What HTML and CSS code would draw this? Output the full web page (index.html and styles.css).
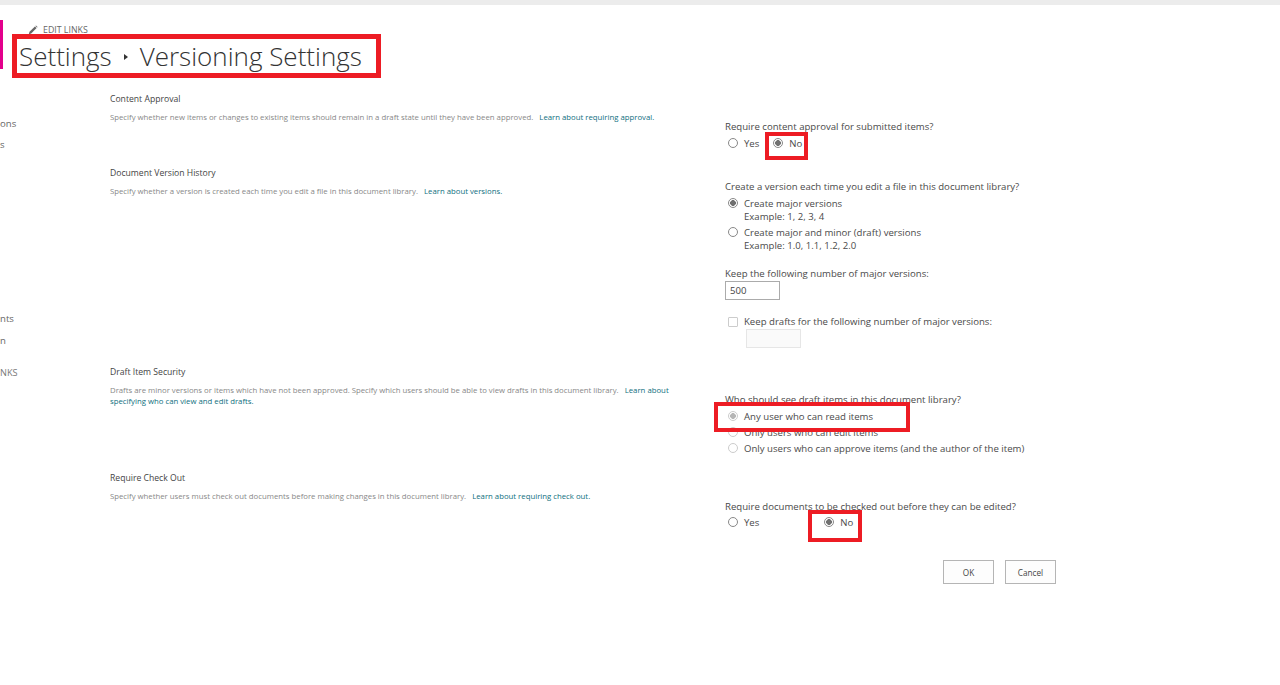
FILE: index.html
```html
<!DOCTYPE html>
<html lang="en">
<head>
<meta charset="utf-8">
<title>Versioning Settings</title>
<link rel="stylesheet" href="styles.css">
</head>
<body>
<div class="topbar"></div>
<div class="brand-stripe"></div>
<header class="header">
  <div class="edit-links">
    <svg class="pencil" viewBox="0 0 10 10" width="10" height="10"><path d="M0.8 9.2 L1.5 6.8 L6.9 1.4 L8.6 3.1 L3.2 8.5 Z" fill="#666"/><path d="M7.4 0.9 L8 0.4 L9.6 2 L9.1 2.6 Z" fill="#666"/></svg>
    <span>EDIT LINKS</span>
  </div>
  <h1 class="title"><span>Settings</span><span class="crumb-arrow"></span><span>Versioning Settings</span></h1>
</header>
<div class="page">
  <nav class="nav">
    <a class="nav-item nav-a">ons</a>
    <a class="nav-item nav-b">s</a>
    <a class="nav-item nav-c">nts</a>
    <a class="nav-item nav-d">n</a>
    <a class="nav-item nav-e">NKS</a>
  </nav>
  <main class="form">
    <section class="row row-approval">
      <div class="info">
        <h2>Content Approval</h2>
        <p>Specify whether new items or changes to existing items should remain in a draft state until they have been approved. &nbsp; <a href="#">Learn about requiring approval.</a></p>
      </div>
      <div class="controls pad-approval">
        <div class="q">Require content approval for submitted items?</div>
        <div class="inline inline-gap">
          <label class="opt gap-yes"><input type="radio" name="a"><span>Yes</span></label>
          <label class="opt"><input type="radio" name="a" checked><span>No</span></label>
        </div>
      </div>
    </section>
    <section class="row row-history">
      <div class="info">
        <h2>Document Version History</h2>
        <p>Specify whether a version is created each time you edit a file in this document library. &nbsp; <a href="#">Learn about versions.</a></p>
      </div>
      <div class="controls pad-history">
        <div class="q">Create a version each time you edit a file in this document library?</div>
        <label class="opt opt-tight opt-first"><input type="radio" name="b" checked><span>Create major versions</span></label>
        <div class="example">Example: 1, 2, 3, 4</div>
        <label class="opt opt-tight"><input type="radio" name="b"><span>Create major and minor (draft) versions</span></label>
        <div class="example">Example: 1.0, 1.1, 1.2, 2.0</div>
        <div class="q q-keep">Keep the following number of major versions:</div>
        <input class="num" type="text" value="500">
        <label class="opt opt-check"><input type="checkbox" disabled><span>Keep drafts for the following number of major versions:</span></label>
        <input class="num num-off" type="text" disabled>
      </div>
    </section>
    <section class="row row-draft">
      <div class="info">
        <h2>Draft Item Security</h2>
        <p>Drafts are minor versions or items which have not been approved. Specify which users should be able to view drafts in this document library. &nbsp; <a href="#">Learn about</a> <a href="#">specifying who can view and edit drafts.</a></p>
      </div>
      <div class="controls pad-draft">
        <div class="q">Who should see draft items in this document library?</div>
        <label class="opt opt-any"><input type="radio" name="c" checked disabled><span>Any user who can read items</span></label>
        <label class="opt"><input type="radio" name="c" disabled><span>Only users who can edit items</span></label>
        <label class="opt"><input type="radio" name="c" disabled><span>Only users who can approve items (and the author of the item)</span></label>
      </div>
    </section>
    <section class="row row-checkout">
      <div class="info">
        <h2>Require Check Out</h2>
        <p>Specify whether users must check out documents before making changes in this document library. &nbsp; <a href="#">Learn about requiring check out.</a></p>
      </div>
      <div class="controls pad-checkout">
        <div class="q">Require documents to be checked out before they can be edited?</div>
        <div class="inline">
          <label class="opt gap-yes-wide"><input type="radio" name="d"><span>Yes</span></label>
          <label class="opt"><input type="radio" name="d" checked><span>No</span></label>
        </div>
        <div class="buttons">
          <button type="button" class="btn btn-ok">OK</button>
          <button type="button" class="btn btn-cancel">Cancel</button>
        </div>
      </div>
    </section>
  </main>
</div>
<div class="mark mark-title"></div>
<div class="mark mark-no1"></div>
<div class="mark mark-any"></div>
<div class="mark mark-no2"></div>
</body>
</html>
```
FILE: styles.css
```css
* { box-sizing: border-box; }
html, body { margin: 0; padding: 0; }
body {
  position: relative;
  height: 685px;
  overflow: hidden;
  background: #fff;
  color: #4a4a4a;
  font-family: "Open Sans", "Noto Sans", "Liberation Sans", sans-serif;
  font-size: 9.6px;
}
.topbar { height: 5px; background: #ececec; }
.brand-stripe {
  position: absolute; left: 0; top: 20px;
  width: 3px; height: 49px; background: #e3008c;
}
.header { height: 78px; padding: 18px 0 0 19px; }
.edit-links {
  display: flex; align-items: center; gap: 5px;
  margin-left: 9px; height: 13px;
  font-size: 8.8px; color: #666;
}
.title {
  margin: 0; display: flex; align-items: center;
  height: 40px; font-size: 26px; font-weight: 300; color: #333; white-space: nowrap;
}
.crumb-arrow {
  width: 0; height: 0; margin: 2px 12px 0 12px;
  border-left: 4px solid #333; border-top: 3.5px solid transparent; border-bottom: 3.5px solid transparent;
}
.page { display: flex; }
.nav { width: 110px; flex: none; padding-top: 34px; color: #666; }
.nav-item { display: block; line-height: 14px; }
.nav-b { margin-top: 7px; }
.nav-c { margin-top: 160px; }
.nav-d { margin-top: 8px; }
.nav-e { margin-top: 17.5px; font-size: 9.2px; color: #777; }
.form { width: 1000px; }
.row { display: grid; grid-template-columns: 560px 1fr; column-gap: 55px; padding-top: 8px; }
.row-approval { height: 74px; padding-top: 8.5px; }
.row-history { height: 199px; padding-top: 8.5px; }
.row-draft { height: 106px; padding-top: 8.5px; }
.row-checkout { padding-top: 8.5px; }
.info h2 { margin: 0; font-size: 8.65px; font-weight: 400; line-height: 14px; color: #444; }
.info p { margin: 6.5px 0 0; font-size: 7.77px; line-height: 10.5px; color: #888; }
.info a { color: #0f6f80; text-decoration: none; }
.controls { color: #4a4a4a; }
.pad-approval { padding-top: 28.5px; }
.pad-history { padding-top: 14.5px; }
.pad-draft { padding-top: 28.5px; }
.pad-checkout { padding-top: 29.5px; }
.q { line-height: 14px; white-space: nowrap; }
.opt { display: flex; align-items: center; height: 16px; white-space: nowrap; }
.opt-tight { height: 14px; }
.opt-first { margin-top: 2px; }
.opt-any { margin-top: 1px; }
.opt input {
  appearance: none; margin: 0 6px 0 3px; width: 10px; height: 10px; flex: none;
  border: 1px solid #888; border-radius: 50%; background: #fff;
}
.opt input:checked { background: radial-gradient(circle, #707070 0 2.6px, #fff 3.1px); }
.opt input:disabled { border-color: #ccc; }
.opt input:disabled:checked { background: radial-gradient(circle, #b5b5b5 0 2.6px, #fff 3.1px); }
.opt input[type="checkbox"] { border-radius: 1px; }
.inline { display: flex; }
.inline-gap { margin-top: 1px; }
.gap-yes { margin-right: 11px; }
.gap-yes-wide { margin-right: 62px; }
.example { line-height: 13px; margin: 0 0 2px 19px; }
.q-keep { margin-top: 15px; }
.num {
  display: block; width: 55px; height: 19px; margin: 0; padding: 0 4px;
  border: 1px solid #ababab; font: inherit; color: #444; background: #fff;
}
.opt-check { margin-top: 14.5px; height: 14px; }
.num-off { margin-left: 21px; border-color: #e6e6e6; background: #fafafa; }
.buttons { display: flex; gap: 11px; margin: 30px 0 0 218px; }
.btn {
  height: 24px; padding: 0; background: #fdfdfd; border: 1px solid #b5b5b5;
  font: inherit; font-size: 8.2px; color: #444;
}
.btn-ok { width: 51px; }
.btn-cancel { width: 51px; }
.mark { position: absolute; border: 4px solid #ed1c24; }
.mark-title { left: 12px; top: 34px; width: 369px; height: 44px; border-width: 5px; }
.mark-no1 { left: 765px; top: 132px; width: 43px; height: 28px; }
.mark-any { left: 714px; top: 402px; width: 196px; height: 30px; }
.mark-no2 { left: 808px; top: 510px; width: 54px; height: 32px; }
```
